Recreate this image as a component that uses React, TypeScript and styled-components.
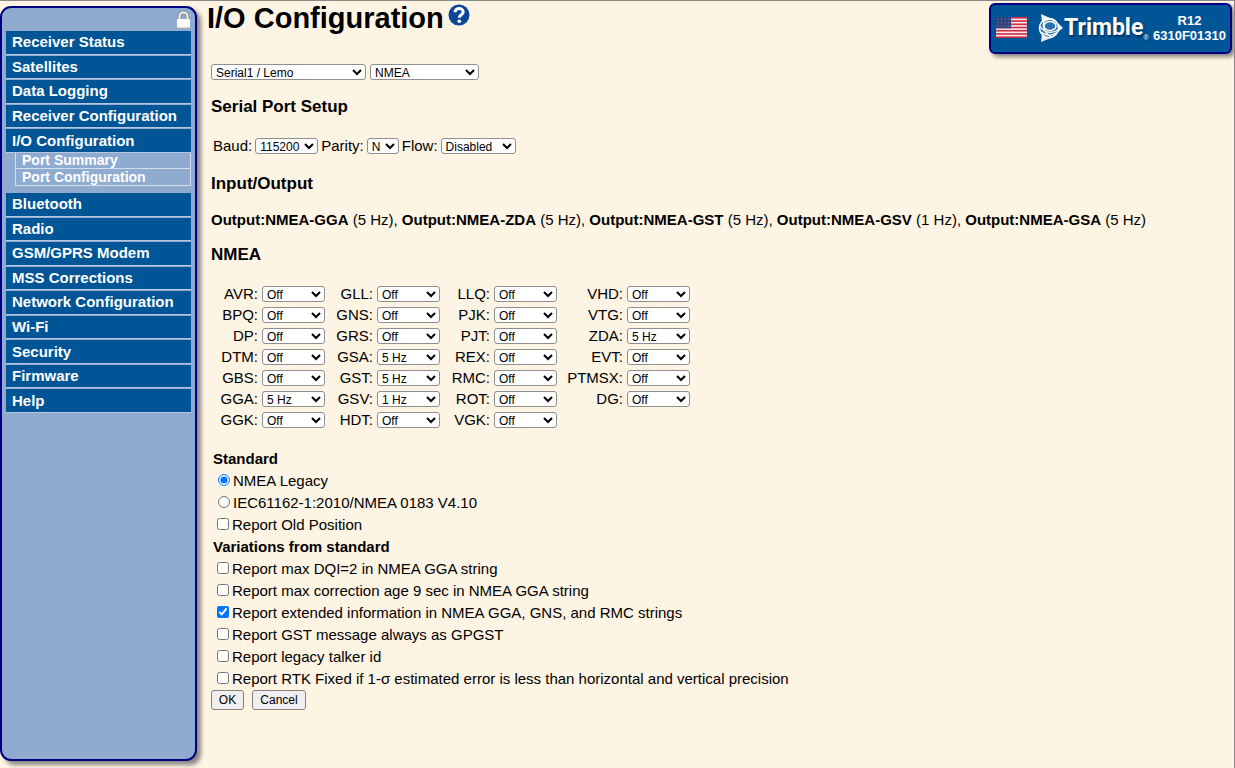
import React from "react";
import styled, { createGlobalStyle } from "styled-components";

const GlobalStyle = createGlobalStyle`
  * { box-sizing: border-box; }
  body {
    margin: 0;
    background: #fef4e4;
    color: #000;
    font: 15px/22px "Liberation Sans", Arial, sans-serif;
  }
`;

const Page = styled.div`
  display: flex;
  align-items: stretch;
  gap: 10px;
  min-height: 100vh;
  padding: 5px 2px 7px 0;
  border-top: 1px solid #8c8a86;
  border-right: 1px solid #8c8a86;
`;

const Sidebar = styled.nav`
  flex: 0 0 197px;
  padding: 2px 4px 8px;
  background: #8fabd0;
  border: 2px solid #000080;
  border-radius: 11px;
  box-shadow: 4px 4px 4px #8a8784;
`;

const LockRow = styled.div`
  display: flex;
  justify-content: flex-end;
  height: 21px;
`;

const MenuList = styled.ul<{ $height: number }>`
  display: grid;
  grid-auto-rows: 1fr;
  gap: 2px;
  min-height: ${(p) => p.$height}px;
  margin: 0;
  padding: 0;
  list-style: none;
`;

const MenuLink = styled.a`
  display: flex;
  align-items: center;
  height: 100%;
  padding-left: 6px;
  background: #005596;
  box-shadow: 0 1px 0 #b4c8e0;
  color: #fff;
  font-weight: bold;
  text-decoration: none;
`;

const SubMenu = styled.ul`
  margin: 0 0 7px 9px;
  padding: 0;
  list-style: none;
  border: 1px solid #d3dfee;
  border-top: 0;
`;

const SubItem = styled.li`
  & + & { border-top: 1px solid #d3dfee; }
`;

const SubLink = styled.a`
  display: block;
  padding-left: 6px;
  color: #fff;
  font-size: 14px;
  font-weight: bold;
  line-height: 16px;
  text-decoration: none;
`;

const Main = styled.main`
  flex: 1;
  min-width: 0;
`;

const Header = styled.header`
  display: flex;
  justify-content: space-between;
  align-items: flex-start;
  height: 58px;
`;

const TitleGroup = styled.div`
  display: flex;
  align-items: flex-start;
  gap: 4px;
`;

const Title = styled.h1`
  margin: 0;
  font-size: 29px;
  line-height: 24px;
`;

const HelpLink = styled.a`
  display: block;
  height: 22px;
  margin-top: -2px;
`;

const Badge = styled.div`
  display: flex;
  align-items: center;
  width: 243px;
  height: 51px;
  margin-top: -3px;
  padding: 0 4px 2px 5px;
  background: #005596;
  border: 2px solid #000080;
  border-radius: 6px;
  box-shadow: 3px 3px 4px #8a8784;
  color: #fff;

  svg { flex: none; }
`;

const Brand = styled.div`
  display: flex;
  align-items: center;
  margin-left: 11px;
  text-shadow: 1px 2px 2px #00305c;
`;

const BrandName = styled.span`
  font: bold 23px/32px Roboto, "Liberation Sans", sans-serif;
`;

const Registered = styled.span`
  align-self: flex-end;
  font-size: 7px;
  line-height: 12px;
`;

const Device = styled.div`
  margin-left: auto;
  font-size: 13px;
  font-weight: bold;
  line-height: 15px;
  text-align: center;
`;

const Form = styled.form`
  padding-left: 4px;
`;

const Row = styled.div`
  display: flex;
  align-items: center;
  gap: 4px;
  height: 16px;
`;

const SetupRow = styled(Row)`
  gap: 3px;
  height: 22px;
  padding-left: 2px;
`;

const Heading = styled.h2`
  margin: 0;
  padding: 16px 0 17px;
  font-size: 17px;
  line-height: 22px;
`;

const Select = styled.select<{ $width: number }>`
  width: ${(p) => p.$width}px;
  height: 16px;
  margin: 0;
  padding: 0 0 2px;
  background: #fff;
  border: 1px solid #8f8f8f;
  border-radius: 3px;
  color: #000;
  font: 12px "Liberation Sans", Arial, sans-serif;
`;

const Summary = styled.p`
  margin: 0;
  line-height: 16px;
`;

const Messages = styled.div`
  display: flex;
  align-items: flex-start;
  padding-top: 3px;
  margin-bottom: 15px;
`;

const MessageColumn = styled.div<{ $label: number }>`
  display: grid;
  grid-template-columns: ${(p) => p.$label}px 63px;
  grid-auto-rows: 21px;
`;

const MessageLabel = styled.label`
  padding-right: 4px;
  line-height: 16px;
  text-align: right;
`;

const Options = styled.fieldset`
  margin: 0;
  padding: 0 0 0 2px;
  border: 0;
`;

const OptionTitle = styled.div`
  font-weight: bold;
`;

const Option = styled.label`
  display: flex;
  align-items: center;
  gap: 3px;
  width: fit-content;
  height: 22px;
  padding-left: 4px;
`;

const Tick = styled.input`
  width: 12px;
  height: 12px;
  margin: 0 0 2px;
`;

const Radio = styled(Tick)`
  margin-left: 1px;
`;

const Buttons = styled.div`
  display: flex;
  gap: 8px;
`;

const Button = styled.button<{ $width: number }>`
  width: ${(p) => p.$width}px;
  height: 20px;
  padding: 0;
  background: #efefef;
  border: 1px solid #85827e;
  border-radius: 3px;
  color: #000;
  font: 12px "Liberation Sans", Arial, sans-serif;
`;

const Lock = () => (
  <svg width="15" height="19" viewBox="0 0 15 19" aria-label="Secure">
    <path d="M3.500 10V6.500a4 4 0 0 1 8 0V10" fill="none" stroke="#85827e" strokeWidth="3.600" />
    <path d="M3.500 10V6.500a4 4 0 0 1 8 0V10" fill="none" stroke="#f6f4f0" strokeWidth="2" />
    <rect x="1" y="9" width="13" height="9" rx="1" fill="#fff" />
    <path d="M1 18h13" stroke="#b5aea4" />
  </svg>
);

const HelpIcon = () => (
  <svg width="22" height="22" viewBox="0 0 22 22" aria-label="Help">
    <circle cx="11" cy="11" r="10.500" fill="#0b4796" />
    <path d="M7 8.200C7 3.300 15.200 3.400 15.200 8c0 2.700-3.900 2.900-3.900 5.700" fill="none" stroke="#fff" strokeWidth="3" />
    <circle cx="11.300" cy="17.200" r="1.800" fill="#fff" />
  </svg>
);

const stripes = Array.from({ length: 13 }, (_, i) => i);

const Flag = () => (
  <svg width="31" height="21" viewBox="0 0 31 21" aria-label="United States">
    <rect width="31" height="21" fill="#f3e9ee" />
    {stripes.filter((i) => i % 2 === 0).map((i) => (
      <rect key={i} y={(i * 21) / 13} width="31" height={21 / 13} fill="#cf2b42" />
    ))}
    <rect width="15" height="11.300" fill="#33407e" />
    {stripes.slice(0, 12).map((i) => (
      <circle key={i} cx={2 + (i % 4) * 3.600} cy={2 + Math.floor(i / 4) * 3.600} r=".6" fill="#8089b4" />
    ))}
  </svg>
);

const Globe = () => (
  <svg width="26" height="28" viewBox="0 0 26 28" aria-hidden="true">
    <path d="M3 0l9 4 9 6 4 4-5 4-7 6-10 4 1-8V8z" fill="#e9f1f8" />
    <circle cx="11" cy="14" r="9.500" fill="#2c72aa" stroke="#fff" strokeWidth="1.600" />
    <g fill="none" stroke="#fff" strokeWidth="1.500">
      <ellipse cx="12" cy="12" rx="6" ry="4.500" />
      <path d="M2 12c4 7 12 8 18 4M3 18c5 4 11 4 15 1M6 7c-2 6 1 12 7 16M5 8c5-4 10-4 14 1" />
    </g>
  </svg>
);

const topMenu = ["Receiver Status", "Satellites", "Data Logging", "Receiver Configuration", "I/O Configuration"];
const bottomMenu = ["Bluetooth", "Radio", "GSM/GPRS Modem", "MSS Corrections", "Network Configuration", "Wi-Fi", "Security", "Firmware", "Help"];

const messageColumns: { label: number; items: [string, string][] }[] = [
  { label: 51, items: [["AVR", "Off"], ["BPQ", "Off"], ["DP", "Off"], ["DTM", "Off"], ["GBS", "Off"], ["GGA", "5 Hz"], ["GGK", "Off"]] },
  { label: 52, items: [["GLL", "Off"], ["GNS", "Off"], ["GRS", "Off"], ["GSA", "5 Hz"], ["GST", "5 Hz"], ["GSV", "1 Hz"], ["HDT", "Off"]] },
  { label: 54, items: [["LLQ", "Off"], ["PJK", "Off"], ["PJT", "Off"], ["REX", "Off"], ["RMC", "Off"], ["ROT", "Off"], ["VGK", "Off"]] },
  { label: 70, items: [["VHD", "Off"], ["VTG", "Off"], ["ZDA", "5 Hz"], ["EVT", "Off"], ["PTMSX", "Off"], ["DG", "Off"]] },
];

const outputs = [["GGA", 5], ["ZDA", 5], ["GST", 5], ["GSV", 1], ["GSA", 5]];

const variations = [
  "Report max DQI=2 in NMEA GGA string",
  "Report max correction age 9 sec in NMEA GGA string",
  "Report extended information in NMEA GGA, GNS, and RMC strings",
  "Report GST message always as GPGST",
  "Report legacy talker id",
  "Report RTK Fixed if 1-σ estimated error is less than horizontal and vertical precision",
];

const Menu = ({ items, height }: { items: string[]; height: number }) => (
  <MenuList $height={height}>
    {items.map((item) => (
      <li key={item}><MenuLink href="#">{item}</MenuLink></li>
    ))}
  </MenuList>
);

export default function App() {
  return (
    <>
      <GlobalStyle />
      <Page>
        <Sidebar>
          <LockRow><Lock /></LockRow>
          <Menu items={topMenu} height={121} />
          <SubMenu>
            <SubItem><SubLink href="#">Port Summary</SubLink></SubItem>
            <SubItem><SubLink href="#">Port Configuration</SubLink></SubItem>
          </SubMenu>
          <Menu items={bottomMenu} height={219} />
        </Sidebar>
        <Main>
          <Header>
            <TitleGroup>
              <Title>I/O Configuration</Title>
              <HelpLink href="#"><HelpIcon /></HelpLink>
            </TitleGroup>
            <Badge>
              <Flag />
              <Brand>
                <Globe />
                <BrandName>Trimble</BrandName>
                <Registered>®</Registered>
              </Brand>
              <Device>R12<br />6310F01310</Device>
            </Badge>
          </Header>
          <Form onSubmit={(e) => e.preventDefault()}>
            <Row>
              <Select $width={155} aria-label="Port"><option>Serial1 / Lemo</option></Select>
              <Select $width={109} aria-label="Type"><option>NMEA</option></Select>
            </Row>
            <Heading>Serial Port Setup</Heading>
            <SetupRow>
              <label htmlFor="baud">Baud:</label>
              <Select $width={63} id="baud"><option>115200</option></Select>
              <label htmlFor="parity">Parity:</label>
              <Select $width={32} id="parity"><option>N</option></Select>
              <label htmlFor="flow">Flow:</label>
              <Select $width={75} id="flow"><option>Disabled</option></Select>
            </SetupRow>
            <Heading>Input/Output</Heading>
            <Summary>
              {outputs.map(([name, rate], i) => (
                <React.Fragment key={name}>
                  {i > 0 && ", "}<b>Output:NMEA-{name}</b> ({rate} Hz)
                </React.Fragment>
              ))}
            </Summary>
            <Heading>NMEA</Heading>
            <Messages>
              {messageColumns.map((column) => (
                <MessageColumn key={column.label} $label={column.label}>
                  {column.items.map(([name, rate]) => (
                    <React.Fragment key={name}>
                      <MessageLabel htmlFor={name}>{name}:</MessageLabel>
                      <Select $width={63} id={name} defaultValue={rate}>
                        <option>Off</option>
                        <option>1 Hz</option>
                        <option>5 Hz</option>
                      </Select>
                    </React.Fragment>
                  ))}
                </MessageColumn>
              ))}
            </Messages>
            <Options>
              <OptionTitle>Standard</OptionTitle>
              <Option><Radio type="radio" name="standard" defaultChecked />NMEA Legacy</Option>
              <Option><Radio type="radio" name="standard" />IEC61162-1:2010/NMEA 0183 V4.10</Option>
              <Option><Tick type="checkbox" />Report Old Position</Option>
              <OptionTitle>Variations from standard</OptionTitle>
              {variations.map((text, i) => (
                <Option key={text}><Tick type="checkbox" defaultChecked={i === 2} />{text}</Option>
              ))}
            </Options>
            <Buttons>
              <Button $width={33} type="submit">OK</Button>
              <Button $width={54} type="button">Cancel</Button>
            </Buttons>
          </Form>
        </Main>
      </Page>
    </>
  );
}
